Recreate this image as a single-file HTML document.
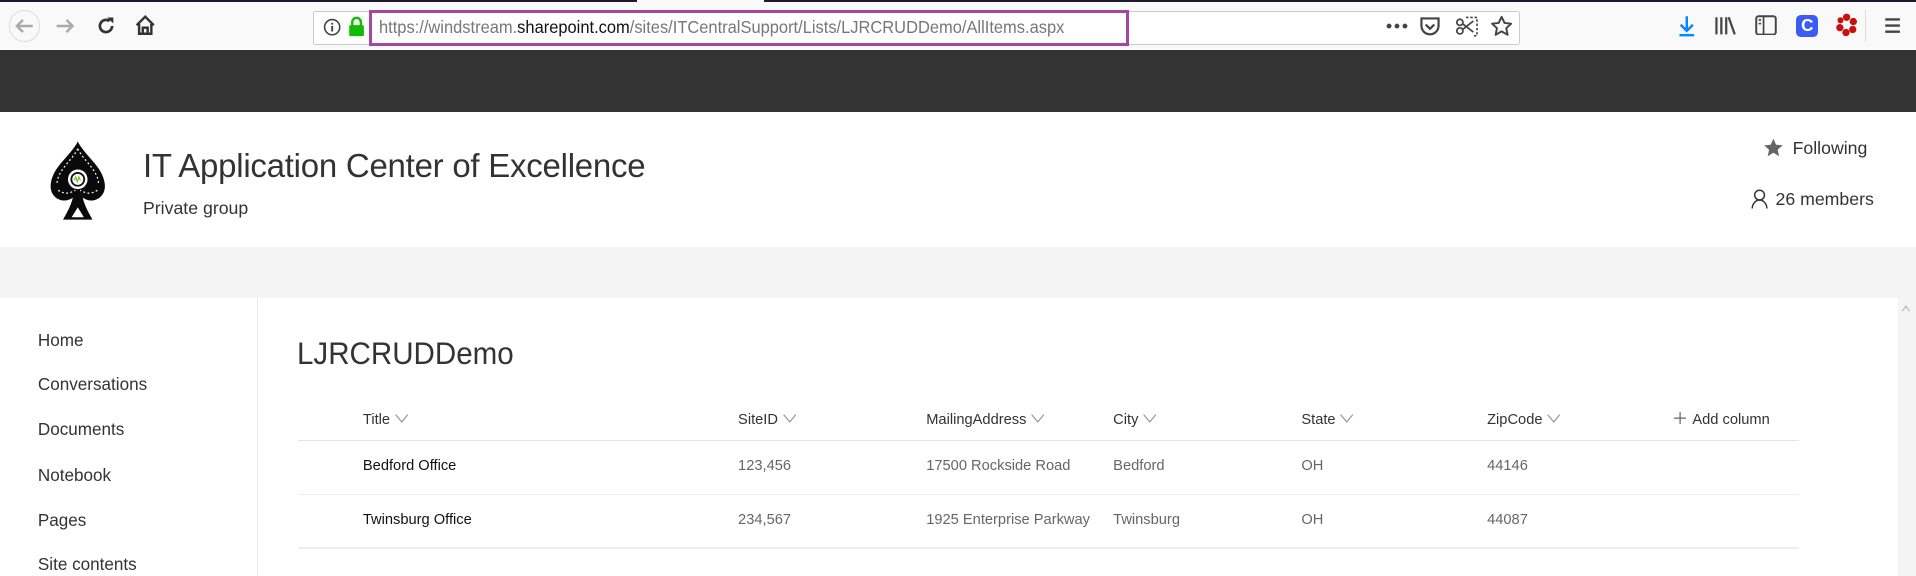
<!DOCTYPE html>
<html><head><meta charset="utf-8"><style>
*{margin:0;padding:0;box-sizing:border-box}
html,body{width:1916px;height:576px;overflow:hidden;background:#fff}
#w{zoom:1.22194;width:1568px;height:472px;position:relative;font-family:"Liberation Sans",sans-serif;color:#333}
.a{position:absolute;white-space:nowrap}
.th{font-size:12px;color:#333;top:337px}
.th svg{margin-left:4px;vertical-align:1px}
.c{font-size:12px;color:#666}
.nav{left:31px;font-size:14px;color:#333}
</style></head><body><div id="w">
<div class="a" style="left:0;top:0;width:1568px;height:2px;background:#1c1b2b"></div>
<div class="a" style="left:521px;top:0;width:104px;height:2px;background:#f9f9fa"></div>
<div class="a" style="left:0;top:2px;width:1568px;height:39px;background:#f9f9fa"></div>
<div class="a" style="left:7px;top:8px;width:26px;height:26px;border:1px solid #ddd;border-radius:50%"></div>
<svg class="a" style="left:10px;top:12px" width="20" height="18" viewBox="0 0 20 18"><path d="M17 9H4M9 4L4 9l5 5" stroke="#aaa" stroke-width="2" fill="none"/></svg>
<svg class="a" style="left:43px;top:12px" width="20" height="18" viewBox="0 0 20 18"><path d="M3 9h13M11 4l5 5-5 5" stroke="#aaa" stroke-width="2" fill="none"/></svg>
<svg class="a" style="left:78px;top:12px" width="18" height="18" viewBox="0 0 18 18"><path d="M14 9a5 5 0 1 1-2-4" stroke="#333" stroke-width="2.2" fill="none"/><path d="M10 2h5v5z" fill="#333"/></svg>
<svg class="a" style="left:109px;top:11px" width="20" height="20" viewBox="0 0 20 20"><path d="M3 10L10 3l7 7M5 9v8h10V9M8 17v-5h4v5" stroke="#333" stroke-width="2" fill="none"/></svg>
<div class="a" style="left:256px;top:9px;width:988px;height:28px;background:#fff;border:1px solid #ccc;border-radius:2px"></div>
<svg class="a" style="left:264px;top:15px" width="15" height="15"><circle cx="7.5" cy="7.5" r="6.2" stroke="#444" stroke-width="1.3" fill="none"/><path d="M7.5 6.5v4.5M7.5 4v1.4" stroke="#444" stroke-width="1.6"/></svg>
<svg class="a" style="left:285px;top:13px" width="14" height="17"><path d="M3.5 8V5a3.5 3.5 0 0 1 7 0v3" stroke="#12bc00" stroke-width="2" fill="none"/><rect x="1" y="7.5" width="12" height="9" rx="1" fill="#12bc00"/></svg>
<div class="a" style="left:302px;top:8px;width:622px;height:30px;border:3px solid #a347a0;background:#fff"></div>
<div class="a" style="left:310px;top:14px;font-size:14.5px;color:#777;transform:scaleX(0.93);transform-origin:left">https://windstream.<span style="color:#111">sharepoint.com</span>/sites/ITCentralSupport/Lists/LJRCRUDDemo/AllItems.aspx</div>
<svg class="a" style="left:1134px;top:19px" width="18" height="5"><circle cx="2.5" cy="2.5" r="2" fill="#444"/><circle cx="9" cy="2.5" r="2" fill="#444"/><circle cx="15.5" cy="2.5" r="2" fill="#444"/></svg>
<svg class="a" style="left:1161px;top:13px" width="18" height="17"><path d="M2 2h14v6a7 7 0 0 1-14 0z" stroke="#444" stroke-width="1.8" fill="none"/><path d="M5.5 7l3.5 3.5L12.5 7" stroke="#444" stroke-width="1.8" fill="none"/></svg>
<svg class="a" style="left:1191px;top:12px" width="20" height="19"><circle cx="4" cy="13" r="2.5" stroke="#444" stroke-width="1.4" fill="none"/><circle cx="4" cy="6" r="2.5" stroke="#444" stroke-width="1.4" fill="none"/><path d="M6 7l9 7M6 12l9-7" stroke="#444" stroke-width="1.4"/><path d="M9 2h9v15h-4" stroke="#444" stroke-width="1.3" stroke-dasharray="2 1.5" fill="none"/></svg>
<svg class="a" style="left:1219px;top:12px" width="19" height="18"><path d="M9.5 1.5l2.4 5 5.4.6-4 3.7 1.1 5.4-4.9-2.8-4.9 2.8 1.1-5.4-4-3.7 5.4-.6z" stroke="#444" stroke-width="1.6" fill="none" stroke-linejoin="round"/></svg>
<svg class="a" style="left:1372px;top:12px" width="16" height="18"><path d="M8 1v12M3 8l5 5 5-5" stroke="#0a84ff" stroke-width="2" fill="none"/><path d="M2 16.5h12" stroke="#0a84ff" stroke-width="2"/></svg>
<svg class="a" style="left:1403px;top:13px" width="18" height="16"><path d="M2 1v14M6 1v14M10 1v14M12 1l5 14" stroke="#444" stroke-width="1.8"/></svg>
<svg class="a" style="left:1436px;top:12px" width="18" height="17"><rect x="1" y="1" width="16" height="15" rx="2" stroke="#444" stroke-width="1.6" fill="none"/><path d="M7 1v15M3 4h2M3 7h2" stroke="#444" stroke-width="1.4"/></svg>
<div class="a" style="left:1470px;top:12px;width:18px;height:18px;border-radius:4px;background:#3b5bf5;color:#fff;font:bold 14px 'Liberation Sans',sans-serif;text-align:center;line-height:18px">C</div>
<svg class="a" style="left:1502px;top:11px" width="19" height="19"><g fill="#c81010"><circle cx="9.5" cy="3.5" r="3"/><circle cx="15" cy="7" r="3"/><circle cx="14.5" cy="13.5" r="3"/><circle cx="9" cy="16" r="3"/><circle cx="4" cy="12" r="3"/><circle cx="4.5" cy="6" r="2.5"/></g></svg>
<div class="a" style="left:1526px;top:8px;width:1px;height:26px;background:#ddd"></div>
<svg class="a" style="left:1542px;top:14px" width="14" height="14"><path d="M1 2h12M1 7h12M1 12h12" stroke="#444" stroke-width="2"/></svg>
<div class="a" style="left:0;top:41px;width:1568px;height:51px;background:#333"></div>
<svg class="a" style="left:38px;top:114px" width="52" height="68" viewBox="0 0 52 68"><path d="M26 2C20 14 6 22 4 36c-2 12 10 18 18 12-2 8-6 14-8 18h24c-2-4-6-10-8-18 8 6 20 0 18-12C46 22 32 14 26 2z" fill="#0a0a0a"/><path d="M26 56l-5 8h10z" fill="#fff"/><circle cx="26" cy="33" r="8" fill="#fff"/><circle cx="26" cy="33" r="6" fill="#111"/><circle cx="26" cy="33" r="4.5" fill="#fff"/><path d="M23 34l1.3-3 1.3 4 1.3-4 1.3 3" stroke="#7bbf3a" stroke-width="1" fill="none"/><g stroke="#fff" stroke-width="1" stroke-dasharray="1.5 2" fill="none"><path d="M26 8c-5 10-16 17-17 28"/><path d="M26 8c5 10 16 17 17 28"/><path d="M10 42c6 4 10 2 14 0M42 42c-6 4-10 2-14 0"/></g></svg>
<div class="a" style="left:117px;top:120px;font-size:27px;color:#333;letter-spacing:-0.2px">IT Application Center of Excellence</div>
<div class="a" style="left:117px;top:162px;font-size:14.5px;color:#333">Private group</div>
<svg class="a" style="left:1443px;top:113px" width="17" height="16"><path d="M8.5 0.5l2.2 5 5.4.5-4.1 3.6 1.2 5.3-4.7-2.8-4.7 2.8 1.2-5.3L.9 6l5.4-.5z" fill="#666"/></svg>
<div class="a" style="left:1467px;top:113px;font-size:14.5px;color:#333">Following</div>
<svg class="a" style="left:1433px;top:155px" width="14" height="16"><circle cx="7" cy="5" r="4" stroke="#333" stroke-width="1.2" fill="none"/><path d="M1 16c0-4 3-7 6-7s6 3 6 7" stroke="#333" stroke-width="1.2" fill="none"/></svg>
<div class="a" style="left:1453px;top:155px;font-size:14.5px;color:#333">26 members</div>
<div class="a" style="left:0;top:202px;width:1568px;height:42px;background:#f4f4f4"></div>
<div class="a" style="left:210px;top:244px;width:1px;height:228px;background:#eaeaea"></div>
<div class="a nav" style="top:271px">Home</div>
<div class="a nav" style="top:307px">Conversations</div>
<div class="a nav" style="top:344px">Documents</div>
<div class="a nav" style="top:381px">Notebook</div>
<div class="a nav" style="top:418px">Pages</div>
<div class="a nav" style="top:454px">Site contents</div>
<div class="a" style="left:1553px;top:244px;width:15px;height:228px;background:#f4f4f4"></div>
<svg class="a" style="left:1556px;top:250px" width="8" height="6"><path d="M1 5l3-4 3 4" stroke="#bbb" fill="none"/></svg>
<div class="a" style="left:243px;top:274px;font-size:26px;color:#333;transform:scaleX(0.93);transform-origin:left">LJRCRUDDemo</div>
<div class="a th" style="left:297px">Title<svg width="11" height="7"><path d="M.5 .5l5 6 5-6" stroke="#999" fill="none"/></svg></div>
<div class="a th" style="left:604px">SiteID<svg width="11" height="7"><path d="M.5 .5l5 6 5-6" stroke="#999" fill="none"/></svg></div>
<div class="a th" style="left:758px">MailingAddress<svg width="11" height="7"><path d="M.5 .5l5 6 5-6" stroke="#999" fill="none"/></svg></div>
<div class="a th" style="left:911px">City<svg width="11" height="7"><path d="M.5 .5l5 6 5-6" stroke="#999" fill="none"/></svg></div>
<div class="a th" style="left:1065px">State<svg width="11" height="7"><path d="M.5 .5l5 6 5-6" stroke="#999" fill="none"/></svg></div>
<div class="a th" style="left:1217px">ZipCode<svg width="11" height="7"><path d="M.5 .5l5 6 5-6" stroke="#999" fill="none"/></svg></div>
<div class="a th" style="left:1370px"><svg width="10" height="10" style="margin:0 5px 0 0;vertical-align:0"><path d="M5 0v10M0 5h10" stroke="#666"/></svg>Add column</div>
<div class="a" style="left:244px;top:360px;width:1228px;height:1px;background:#e4e4e4"></div>
<div class="a" style="left:244px;top:404px;width:1228px;height:1px;background:#eee"></div>
<div class="a" style="left:244px;top:448px;width:1228px;height:1px;background:#eee"></div>
<div class="a c" style="left:297px;top:375px;color:#111">Bedford Office</div>
<div class="a c" style="left:604px;top:375px">123,456</div>
<div class="a c" style="left:758px;top:375px">17500 Rockside Road</div>
<div class="a c" style="left:911px;top:375px">Bedford</div>
<div class="a c" style="left:1065px;top:375px">OH</div>
<div class="a c" style="left:1217px;top:375px">44146</div>
<div class="a c" style="left:297px;top:419px;color:#111">Twinsburg Office</div>
<div class="a c" style="left:604px;top:419px">234,567</div>
<div class="a c" style="left:758px;top:419px">1925 Enterprise Parkway</div>
<div class="a c" style="left:911px;top:419px">Twinsburg</div>
<div class="a c" style="left:1065px;top:419px">OH</div>
<div class="a c" style="left:1217px;top:419px">44087</div>
</div></body></html>
